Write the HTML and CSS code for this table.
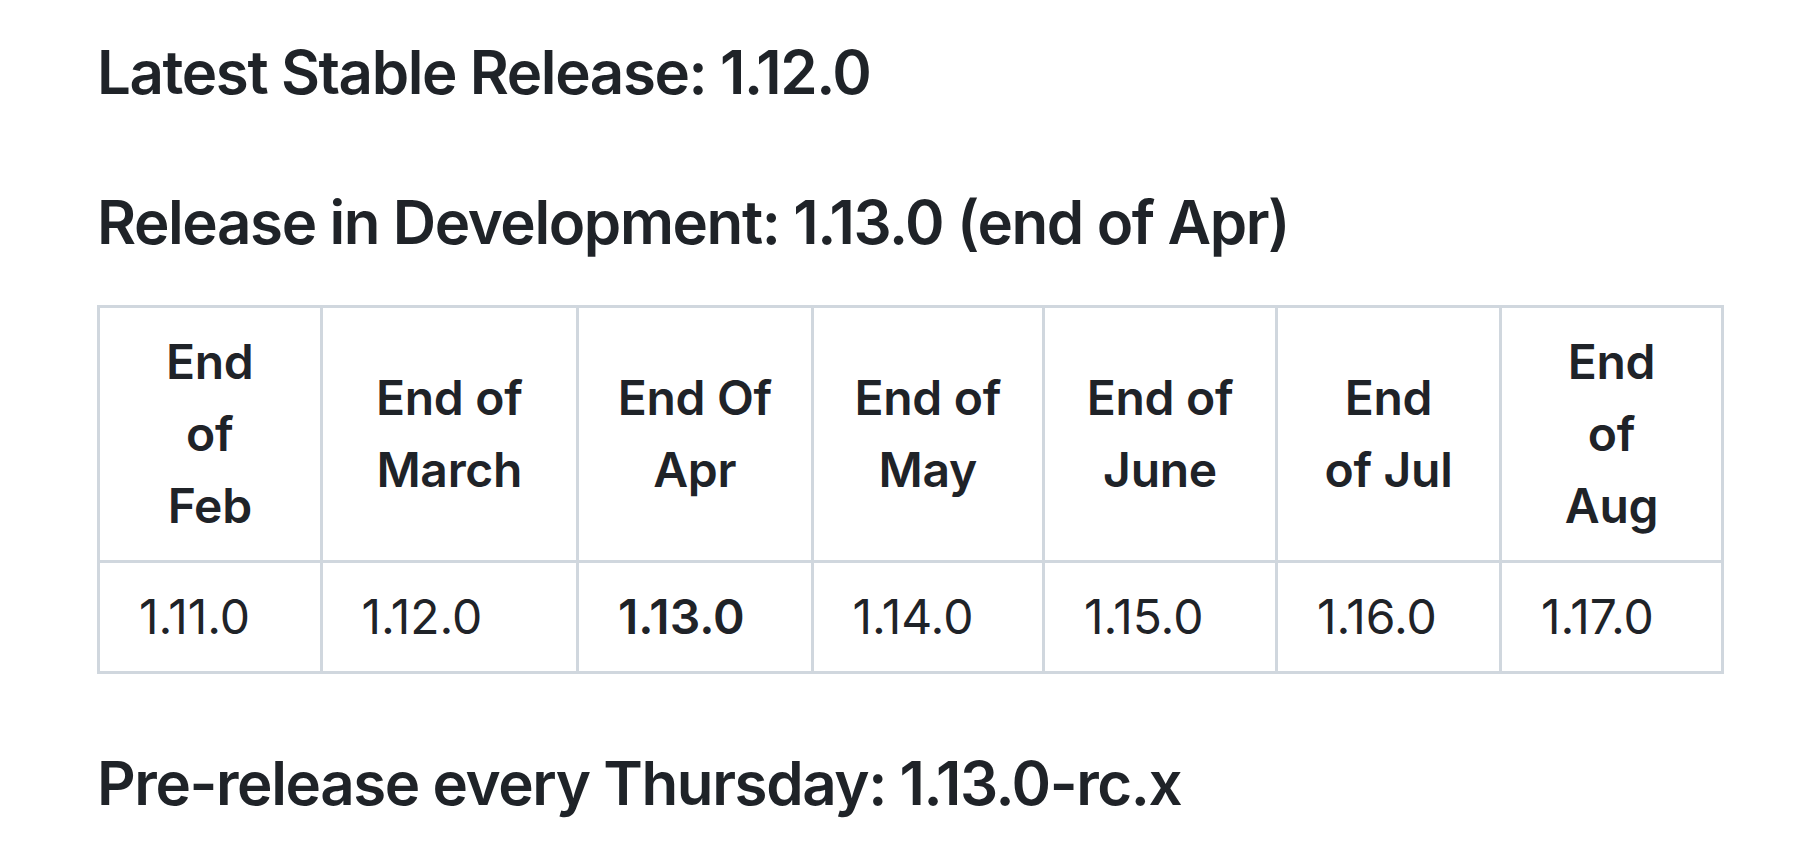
FILE: index.html
```html
<!DOCTYPE html>
<html lang="en">
<head>
<meta charset="utf-8">
<title>Release schedule</title>
<link rel="stylesheet" href="styles.css">
</head>
<body>
<main class="markdown">
  <h3 class="title">Latest Stable Release: 1.12.0</h3>
  <h3 class="title">Release in Development: 1.13.0 (end of Apr)</h3>
  <table class="schedule">
    <thead>
      <tr>
        <th>End<br>of<br>Feb</th>
        <th>End of<br>March</th>
        <th>End Of<br>Apr</th>
        <th>End of<br>May</th>
        <th>End of<br>June</th>
        <th>End<br>of Jul</th>
        <th>End<br>of<br>Aug</th>
      </tr>
    </thead>
    <tbody>
      <tr>
        <td>1.11.0</td>
        <td>1.12.0</td>
        <td><strong>1.13.0</strong></td>
        <td>1.14.0</td>
        <td>1.15.0</td>
        <td>1.16.0</td>
        <td>1.17.0</td>
      </tr>
    </tbody>
  </table>
  <h3 class="title">Pre-release every Thursday: 1.13.0-rc.x</h3>
</main>
</body>
</html>
```

FILE: styles.css
```css
html, body {
  margin: 0;
  padding: 0;
  background: #ffffff;
}

.markdown {
  padding: 35px 72px 0 97px;
  color: #1f2328;
  font-family: Inter, "Noto Sans", "Liberation Sans", sans-serif;
  font-size: 48px;
  line-height: 1.5;
}

.title {
  margin: 0;
  font-size: 60px;
  line-height: 75px;
  font-weight: 600;
  letter-spacing: -1.4px;
  white-space: nowrap;
}

.title + .title {
  margin-top: 75px;
}

.schedule {
  margin: 45px 0 72px;
  width: 1627px;
  table-layout: fixed;
  border-collapse: separate;
  border-spacing: 0;
  border-top: 3px solid #d0d7de;
  border-left: 3px solid #d0d7de;
}

.schedule th,
.schedule td {
  box-sizing: border-box;
  padding: 18px 30px;
  border-right: 3px solid #d0d7de;
  border-bottom: 3px solid #d0d7de;
  line-height: 72px;
  white-space: nowrap;
}

.schedule td {
  padding-left: 39px;
  text-align: left;
}

.schedule th {
  font-weight: 600;
  text-align: center;
  vertical-align: middle;
  letter-spacing: -0.3px;
}

.schedule strong {
  font-weight: 600;
}

.schedule th:nth-child(1) { width: 222.5px; }
.schedule th:nth-child(2) { width: 256.5px; }
.schedule th:nth-child(3) { width: 234.5px; }
.schedule th:nth-child(4) { width: 231.5px; }
.schedule th:nth-child(5) { width: 233px; }
.schedule th:nth-child(6) { width: 224px; }
.schedule th:nth-child(7) { width: 222px; }
```
